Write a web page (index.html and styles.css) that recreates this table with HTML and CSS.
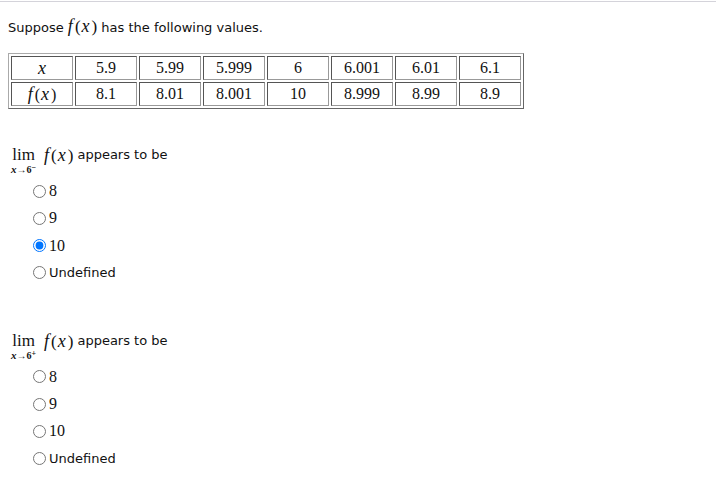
FILE: index.html
```html
<!DOCTYPE html>
<html>
<head>
<meta charset="utf-8">
<link rel="stylesheet" href="styles.css">
</head>
<body>
<div class="rule"></div>
<div class="page">
  <p class="intro">Suppose <span class="m"><i>f</i><span class="p">(</span><i>x</i><span class="p">)</span></span> has the following values.</p>
  <table class="values">
    <tr><td><i>x</i></td><td>5.9</td><td>5.99</td><td>5.999</td><td>6</td><td>6.001</td><td>6.01</td><td>6.1</td></tr>
    <tr><td><i>f</i><span class="p">(</span><i>x</i><span class="p">)</span></td><td>8.1</td><td>8.01</td><td>8.001</td><td>10</td><td>8.999</td><td>8.99</td><td>8.9</td></tr>
  </table>

  <div class="question q1">
    <div class="prompt">
      <span class="lim"><span class="limword">lim</span><span class="limsub"><i>x</i>→6<sup>−</sup></span></span>
      <span class="m"><i>f</i><span class="p">(</span><i>x</i><span class="p">)</span></span> appears to be
    </div>
    <div class="options">
      <label class="opt"><input type="radio" name="a"><span class="num">8</span></label>
      <label class="opt"><input type="radio" name="a"><span class="num">9</span></label>
      <label class="opt"><input type="radio" name="a" checked><span class="num">10</span></label>
      <label class="opt"><input type="radio" name="a"><span>Undefined</span></label>
    </div>
  </div>

  <div class="question q2">
    <div class="prompt">
      <span class="lim"><span class="limword">lim</span><span class="limsub"><i>x</i>→6<sup>+</sup></span></span>
      <span class="m"><i>f</i><span class="p">(</span><i>x</i><span class="p">)</span></span> appears to be
    </div>
    <div class="options">
      <label class="opt"><input type="radio" name="b"><span class="num">8</span></label>
      <label class="opt"><input type="radio" name="b"><span class="num">9</span></label>
      <label class="opt"><input type="radio" name="b"><span class="num">10</span></label>
      <label class="opt"><input type="radio" name="b"><span>Undefined</span></label>
    </div>
  </div>
</div>
</body>
</html>
```
FILE: styles.css
```css
html, body {
  margin: 0;
  background: #fff;
}
body {
  font-family: "DejaVu Sans", Verdana, sans-serif;
  font-size: 13px;
  color: #111;
}
.rule {
  height: 1px;
  margin-top: 1px;
  margin-right: 2px;
  background: #d4d3da;
}
.page {
  padding: 0 8px;
}
.intro {
  margin: 16px 0 0 0;
  line-height: 16px;
}
.m {
  font-family: "Liberation Serif", serif;
  font-size: 17px;
}
.m i, .values i {
  font-family: "Liberation Serif", serif;
  font-style: italic;
  font-size: 18px;
}
.m i + .p, .values i + .p {
  margin-left: 2px;
}
.p + i {
  margin-left: 1px;
}
.num {
  font-family: "Liberation Serif", serif;
  font-size: 16px;
}
.values {
  margin-top: 17px;
  border: 1px solid #777;
  border-color: #aaa #666 #666 #aaa;
  border-spacing: 2px;
  font-family: "Liberation Serif", serif;
  font-size: 16px;
}
.values td {
  width: 60px;
  height: 22px;
  padding: 0;
  text-align: center;
  border: 1px solid #555;
  border-color: #555 #999 #999 #555;
  line-height: 20px;
}
.question {
  margin-top: 37px;
}
.q2 {
  margin-top: 50px;
}
.prompt {
  display: flex;
  align-items: flex-start;
  padding-left: 3px;
  line-height: 18px;
}
.lim {
  display: inline-flex;
  flex-direction: column;
  align-items: center;
  margin-right: 8px;
  font-family: "Liberation Serif", serif;
}
.limword {
  font-size: 17px;
  line-height: 17px;
}
.limsub {
  font-size: 10px;
  line-height: 9px;
  font-weight: bold;
}
.limsub i {
  font-style: italic;
  font-size: 11px;
}
.limsub sup {
  font-size: 8px;
  vertical-align: 3px;
}
.prompt .m {
  margin-right: 4px;
}
.options {
  display: flex;
  flex-direction: column;
  gap: 9.3px;
  margin-top: 8px;
  padding-left: 24px;
}
.opt {
  display: flex;
  align-items: center;
  height: 18px;
}
.opt input {
  margin: 0 3px 0 1px;
  width: 13px;
  height: 13px;
}
```
